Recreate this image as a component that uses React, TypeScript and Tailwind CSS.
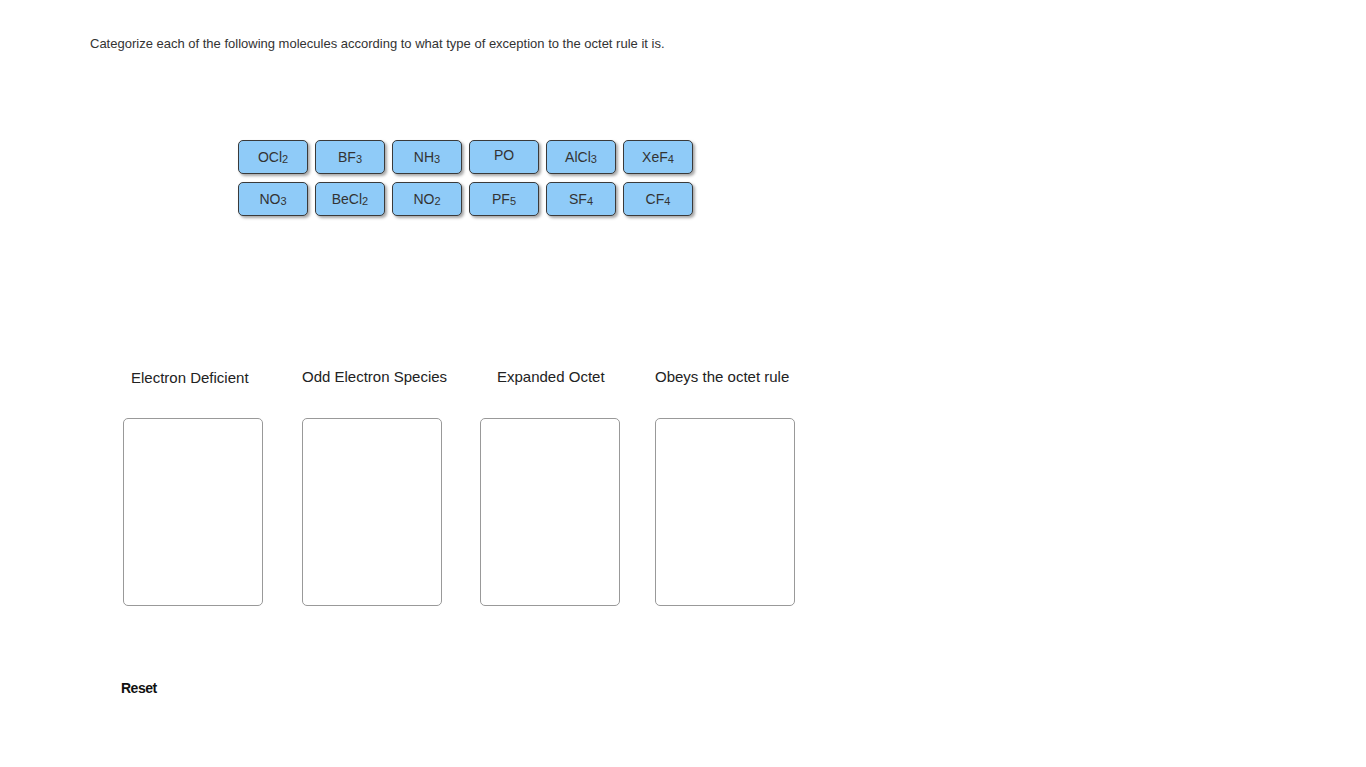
import * as React from "react"

type Chip = { base: string; sub?: string }

const chips: Chip[] = [
  { base: "OCl", sub: "2" },
  { base: "BF", sub: "3" },
  { base: "NH", sub: "3" },
  { base: "PO" },
  { base: "AlCl", sub: "3" },
  { base: "XeF", sub: "4" },
  { base: "NO", sub: "3" },
  { base: "BeCl", sub: "2" },
  { base: "NO", sub: "2" },
  { base: "PF", sub: "5" },
  { base: "SF", sub: "4" },
  { base: "CF", sub: "4" },
]

// label offsets/column spacing follow the original page's (slightly uneven) layout
const bins = [
  { label: "Electron Deficient", col: "", lbl: "pl-[8px] pt-[1px]" },
  { label: "Odd Electron Species", col: "ml-[39px]", lbl: "" },
  { label: "Expanded Octet", col: "ml-[38px]", lbl: "pl-[17px]" },
  { label: "Obeys the octet rule", col: "ml-[35px]", lbl: "" },
]

function MoleculeChip({ chip }: { chip: Chip }) {
  return (
    <button
      className={
        "w-[70px] h-[34px] rounded-[5px] border border-[#3a3a3a] bg-[#8fcbf8] text-[14px] text-[#333] " +
        "shadow-[2px_2px_3px_rgba(0,0,0,0.35)] flex items-center justify-center " +
        (chip.sub ? "pt-[1px]" : "pb-[3px]")
      }
    >
      <span>{chip.base}</span>
      {chip.sub && <span className="text-[11px] relative top-[2px]">{chip.sub}</span>}
    </button>
  )
}

export default function App() {
  return (
    <div
      className="min-h-screen bg-white px-[90px] pt-[37px] text-[#333]"
      style={{ fontFamily: '"Liberation Sans", Arial, sans-serif' }}
    >
      <p className="text-[13px] leading-[14px] tracking-[0px] text-[#333]">
        Categorize each of the following molecules according to what type of exception to the octet rule it is.
      </p>

      {/* Draggable molecules */}
      <div className="ml-[148px] mt-[89px] grid grid-cols-[repeat(6,70px)] gap-x-[7px] gap-y-[8px] w-fit">
        {chips.map((c, i) => (
          <MoleculeChip key={i} chip={c} />
        ))}
      </div>

      {/* Drop zones */}
      <div className="ml-[33px] mt-[152px] flex">
        {bins.map((b) => (
          <div key={b.label} className={"w-[140px] flex flex-col " + b.col}>
            <div className={"h-[18px] text-[15px] leading-[18px] whitespace-nowrap text-[#222] " + b.lbl}>{b.label}</div>
            <div className="mt-[32px] w-[140px] h-[188px] rounded-[5px] border border-[#999] bg-white" />
          </div>
        ))}
      </div>

      <button className="ml-[31px] mt-[74px] text-[14px] leading-[16px] font-bold text-[#111] tracking-[-0.5px]">
        Reset
      </button>
    </div>
  )
}
